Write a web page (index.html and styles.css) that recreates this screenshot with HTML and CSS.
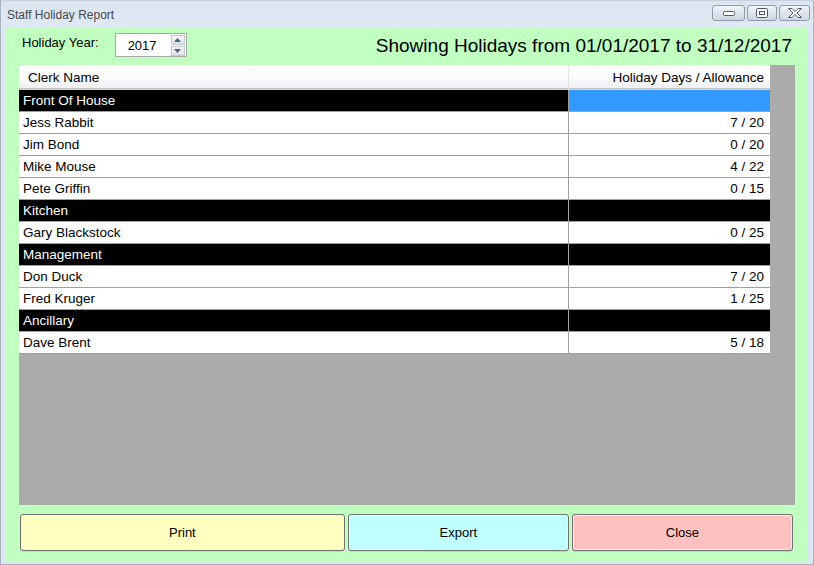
FILE: index.html
```html
<!DOCTYPE html>
<html>
<head>
<meta charset="utf-8">
<title>Staff Holiday Report</title>
<link rel="stylesheet" href="styles.css">
</head>
<body>
<div class="window">
  <div class="titlebar">
    <span class="title">Staff Holiday Report</span>
    <div class="caption-buttons">
      <div class="cap-btn cap-min"><svg width="14" height="8" viewBox="0 0 14 8"><rect x="1.5" y="2.5" width="11" height="4" rx="1" fill="#fff" stroke="#4f5b6b"/></svg></div>
      <div class="cap-btn cap-max"><svg width="12" height="10" viewBox="0 0 12 10"><rect x="0.5" y="0.5" width="11" height="9" rx="1" fill="#fff" stroke="#4f5b6b"/><rect x="3.5" y="3.5" width="5" height="3" fill="#fff" stroke="#4f5b6b"/></svg></div>
      <div class="cap-btn cap-close"><svg width="16" height="12" viewBox="0 0 16 12"><path d="M1.5 1.5h3.5l3 3 3-3h3.5l-4.5 4.5 4.5 4.5h-3.5l-3-3-3 3h-3.5l4.5-4.5z" fill="#fff" stroke="#4f5b6b" stroke-linejoin="round"/></svg></div>
    </div>
  </div>
  <div class="client">
    <div class="toprow">
      <label class="year-label">Holiday Year:</label>
      <div class="spinbox">
        <span class="spin-value">2017</span>
        <div class="spin-buttons">
          <div class="spin-btn"><svg width="7" height="4" viewBox="0 0 7 4"><path d="M0 4L3.5 0 7 4z" fill="#4a6390"/></svg></div>
          <div class="spin-btn"><svg width="7" height="4" viewBox="0 0 7 4"><path d="M0 0L3.5 4 7 0z" fill="#4a6390"/></svg></div>
        </div>
      </div>
      <h1 class="heading">Showing Holidays from 01/01/2017 to 31/12/2017</h1>
    </div>
    <div class="grid-area">
      <div class="table">
        <div class="row header"><div class="cell name">Clerk Name</div><div class="cell days">Holiday Days / Allowance</div></div>
        <div class="row group"><div class="cell name">Front Of House</div><div class="cell days selected"></div></div>
        <div class="row"><div class="cell name">Jess Rabbit</div><div class="cell days">7 / 20</div></div>
        <div class="row"><div class="cell name">Jim Bond</div><div class="cell days">0 / 20</div></div>
        <div class="row"><div class="cell name">Mike Mouse</div><div class="cell days">4 / 22</div></div>
        <div class="row"><div class="cell name">Pete Griffin</div><div class="cell days">0 / 15</div></div>
        <div class="row group"><div class="cell name">Kitchen</div><div class="cell days"></div></div>
        <div class="row"><div class="cell name">Gary Blackstock</div><div class="cell days">0 / 25</div></div>
        <div class="row group"><div class="cell name">Management</div><div class="cell days"></div></div>
        <div class="row"><div class="cell name">Don Duck</div><div class="cell days">7 / 20</div></div>
        <div class="row"><div class="cell name">Fred Kruger</div><div class="cell days">1 / 25</div></div>
        <div class="row group"><div class="cell name">Ancillary</div><div class="cell days"></div></div>
        <div class="row"><div class="cell name">Dave Brent</div><div class="cell days">5 / 18</div></div>
      </div>
    </div>
    <div class="buttons">
      <button class="btn btn-print">Print</button>
      <button class="btn btn-export">Export</button>
      <button class="btn btn-close">Close</button>
    </div>
  </div>
</div>
</body>
</html>
```
FILE: styles.css
```css
html, body {
  margin: 0;
  padding: 0;
}
body {
  width: 814px;
  height: 565px;
  overflow: hidden;
  font-family: "Liberation Sans", Arial, sans-serif;
  background: #ffffff;
}
.window {
  width: 814px;
  height: 565px;
  box-sizing: border-box;
  display: flex;
  flex-direction: column;
  background: #dde7f2;
  border: 1px solid #a9b3bf;
  border-top-color: #c8d2de;
  padding: 0 5px 3px 4px;
}
.titlebar {
  height: 26px;
  display: flex;
  align-items: center;
  justify-content: space-between;
  background: linear-gradient(#dbe4ef, #dfe8f3);
  margin: 0 -5px 0 -4px;
  padding: 0 3px 0 6px;
}
.title {
  font-size: 12px;
  color: #4a4a4a;
  padding-top: 1px;
}
.caption-buttons {
  display: flex;
  gap: 2px;
  align-self: flex-start;
  margin-top: 4px;
}
.cap-btn {
  height: 16px;
  box-sizing: border-box;
  border: 1px solid #8e9aab;
  border-radius: 3px;
  background: linear-gradient(#f3f6fa, #dde4ed 50%, #cfd8e4);
  display: flex;
  align-items: center;
  justify-content: center;
}
.cap-min { width: 33px; }
.cap-max { width: 30px; }
.cap-close { width: 31px; }
.client {
  flex: 1;
  background: #c0ffc0;
  display: flex;
  flex-direction: column;
  padding: 6px 13px 10px 14px;
}
.toprow {
  height: 24px;
  display: flex;
  align-items: center;
}
.year-label {
  font-size: 13px;
  color: #000;
  margin-left: 3px;
  align-self: flex-start;
  padding-top: 2px;
}
.spinbox {
  margin-left: 16px;
  width: 72px;
  height: 24px;
  box-sizing: border-box;
  border: 1px solid #a8a8a8;
  background: #fff;
  display: flex;
  align-items: center;
  justify-content: space-between;
}
.spin-value {
  font-size: 13px;
  padding-left: 12px;
}
.spin-buttons {
  display: flex;
  flex-direction: column;
  gap: 1px;
  margin-right: 1px;
}
.spin-btn {
  width: 14px;
  height: 10px;
  box-sizing: border-box;
  border: 1px solid #c4c8d0;
  background: linear-gradient(#f5f6f8, #dfe3e9);
  display: flex;
  align-items: center;
  justify-content: center;
}
.heading {
  margin: 0 0 0 auto;
  font-size: 19px;
  font-weight: normal;
  color: #000;
  padding-top: 2px;
  margin-right: 3px;
}
.grid-area {
  margin-top: 8px;
  height: 440px;
  background: #ababab;
}
.table {
  width: 751px;
  font-size: 13.5px;
}
.row {
  display: grid;
  grid-template-columns: 550px 201px;
  height: 22px;
  background: #fff;
}
.cell {
  box-sizing: border-box;
  height: 22px;
  border-bottom: 1px solid #a0a0a0;
  display: flex;
  align-items: center;
  white-space: nowrap;
  color: #000;
}
.cell.name {
  border-right: 1px solid #a0a0a0;
  padding-left: 4px;
}
.cell.days {
  justify-content: flex-end;
  padding-right: 6px;
}
.row.header {
  height: 25px;
  background: linear-gradient(#ffffff, #fbfbfc 50%, #eeeff3);
}
.row.header .cell {
  height: 25px;
  padding-top: 1px;
  border-bottom: 1px solid #d5d5d5;
  box-shadow: inset 0 -1px 0 #c2c2c2;
}
.row.header .cell.name {
  padding-left: 9px;
  border-right: 1px solid #e3e3e6;
}
.row.group {
  background: #000;
}
.row.group .cell {
  color: #fff;
}
.cell.selected {
  background: #3399ff;
}
.buttons {
  margin-top: 9px;
  display: flex;
  gap: 3px;
  padding-left: 1px;
  padding-right: 2px;
}
.btn {
  height: 37px;
  box-sizing: border-box;
  border: 1px solid #707070;
  border-radius: 3px;
  box-shadow: inset 0 0 0 1px #f4f4f4, 0 1px 0 #d0d0d0;
  font-family: "Liberation Sans", Arial, sans-serif;
  font-size: 13px;
  color: #000;
  padding: 0;
}
.btn-print {
  width: 326px;
  background: #ffffc0;
}
.btn-export {
  width: 222px;
  background: #c0ffff;
}
.btn-close {
  width: 222px;
  background: #ffc0c0;
}
```
